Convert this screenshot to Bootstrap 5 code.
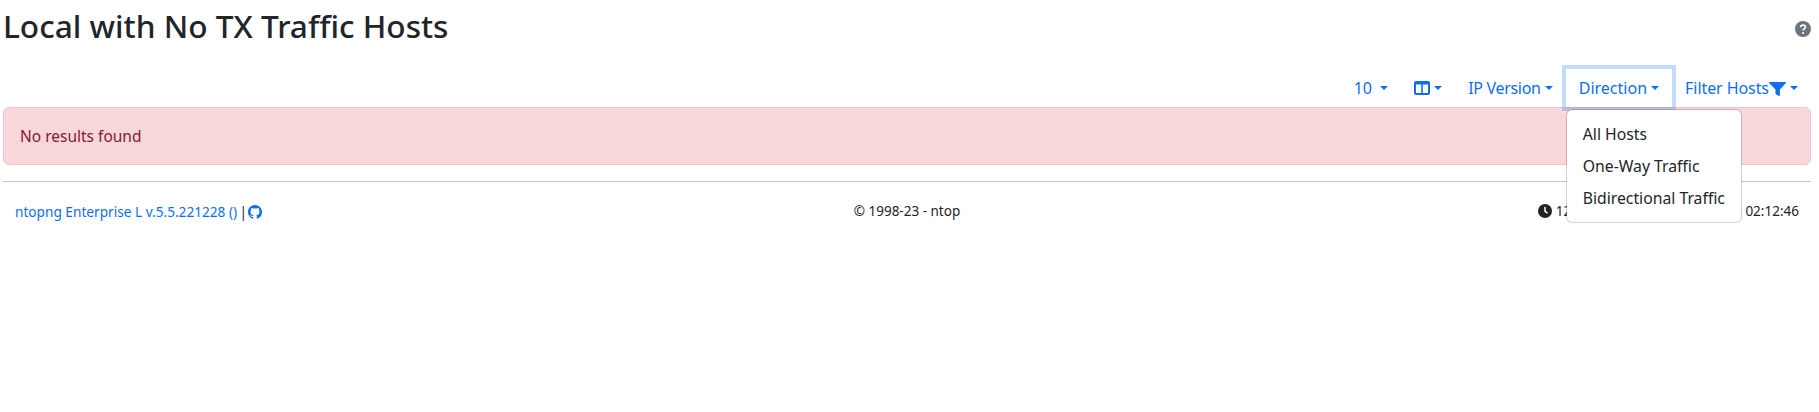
<!DOCTYPE html>
<html lang="en">
<head>
<meta charset="utf-8">
<title>Local with No TX Traffic Hosts</title>
<link href="https://cdn.jsdelivr.net/npm/bootstrap@5.3.0/dist/css/bootstrap.min.css" rel="stylesheet">
<style>
body{font-family:"Noto Sans","Liberation Sans",sans-serif;font-size:16px;color:#212529;background:#fff}
.page-wrap{padding:0 8px 0 3px}
.page-head{height:69px}
.page-title{font-size:31.6px;font-weight:500;line-height:36px;margin:8px 0 0;white-space:nowrap}
.help-ico{width:16px;height:16px;margin:21px 0 0;display:block}
.tool-btn{color:#0d6efd;border:1px solid transparent;border-radius:0;padding:6px 12px;background:transparent;white-space:nowrap;line-height:24px;height:38px;font-size:16px;letter-spacing:-.1px}
.tool-btn:hover{color:#0d6efd}
.tool-btn.wide-text{letter-spacing:0}
.tool-btn.filter-text{letter-spacing:-.08px}
.tool-btn.tight-text{letter-spacing:-.3px}
.tool-btn.is-focus{box-shadow:0 0 0 4px rgba(13,110,253,.25);position:relative;z-index:2}
.tool-ico{width:16px;height:14px;vertical-align:-1px}
.filter-ico{width:17px;height:14px;vertical-align:-2px}
.tool-menu{width:176px;margin-top:3px;left:1px;font-size:15.75px;z-index:1000}
.tool-menu .dropdown-item{white-space:nowrap;line-height:24px}
.result-alert{height:58px;margin:0;font-size:15.5px;line-height:24px;color:#842029;background:#f8d7da;border-color:#f5c2c7}
.foot-rule{margin:16px 0 0;border-top:1px solid #8a8a8a;opacity:.5}
.foot-row{font-size:13.5px;padding:19px 0;line-height:21px}
.foot-left{font-size:13.65px;padding-left:12px}
.foot-right{padding-right:12px}
.foot-sep{letter-spacing:-1.2px}
.foot-row a{text-decoration:none;color:#0d6efd}
.gh-ico{width:14px;height:14px;vertical-align:-2px;fill:#0d6efd}
.clock-ico{width:14px;height:14px;vertical-align:-2px}
</style>
</head>
<body>
<div class="page-wrap">
  <div class="d-flex justify-content-between align-items-start page-head">
    <h2 class="page-title">Local with No TX Traffic Hosts</h2>
    <svg class="help-ico" viewBox="0 0 16 16" aria-label="help"><circle cx="8" cy="8" r="8" fill="#6c757d"/><path d="M5.6 6.2C5.7 4.8 6.7 4.1 8 4.1c1.4 0 2.4.8 2.4 2 0 1-.6 1.4-1.2 1.8-.7.4-1.1.8-1.1 1.6" fill="none" stroke="#fff" stroke-width="1.7"/><circle cx="8.1" cy="12" r="1.1" fill="#fff"/></svg>
  </div>
  <div class="d-flex justify-content-end">
    <div class="dropdown"><button type="button" class="btn tool-btn dropdown-toggle">10 </button></div>
    <div class="dropdown"><button type="button" class="btn tool-btn dropdown-toggle"><svg class="tool-ico" viewBox="0 0 16 14"><rect x="0" y="0" width="16" height="14" rx="2" fill="#0d6efd"/><rect x="2" y="3.5" width="5.2" height="8.5" fill="#fff"/><rect x="8.8" y="3.5" width="5.2" height="8.5" fill="#fff"/></svg></button></div>
    <div class="dropdown"><button type="button" class="btn tool-btn tight-text dropdown-toggle">IP Version</button></div>
    <div class="dropdown">
      <button type="button" class="btn tool-btn wide-text is-focus dropdown-toggle">Direction</button>
      <ul class="dropdown-menu show tool-menu" data-bs-popper="static">
        <li><a class="dropdown-item" href="#">All Hosts</a></li>
        <li><a class="dropdown-item" href="#">One-Way Traffic</a></li>
        <li><a class="dropdown-item" href="#">Bidirectional Traffic</a></li>
      </ul>
    </div>
    <div class="dropdown"><button type="button" class="btn tool-btn filter-text dropdown-toggle">Filter Hosts<svg class="filter-ico" viewBox="0 0 17 14"><path d="M.6 0h15.8c.5 0 .8.6.5 1l-6 6.6V13c0 .8-.8 1.2-1.4.7L7 12.2c-.3-.2-.5-.5-.5-.8V7.6L.1 1C-.2.6.1 0 .6 0z" fill="#0d6efd"/></svg></button></div>
  </div>
  <div class="alert alert-danger result-alert" role="alert">No results found</div>
  <hr class="foot-rule">
  <div class="row foot-row gx-0">
    <div class="col-4 foot-left"><a href="#">ntopng Enterprise L v.5.5.221228 ()</a><span class="foot-sep"> | </span><a href="#"><svg class="gh-ico" viewBox="0 0 16 16"><path d="M8 0C3.58 0 0 3.58 0 8c0 3.54 2.29 6.53 5.47 7.59.4.07.55-.17.55-.38 0-.19-.01-.82-.01-1.49-2.01.37-2.53-.49-2.69-.94-.09-.23-.48-.94-.82-1.13-.28-.15-.68-.52-.01-.53.63-.01 1.08.58 1.23.82.72 1.21 1.87.87 2.33.66.07-.52.28-.87.51-1.07-1.78-.2-3.64-.89-3.64-3.95 0-.87.31-1.59.82-2.15-.08-.2-.36-1.02.08-2.12 0 0 .67-.21 2.2.82.64-.18 1.32-.27 2-.27.68 0 1.36.09 2 .27 1.53-1.04 2.2-.82 2.2-.82.44 1.1.16 1.92.08 2.12.51.56.82 1.27.82 2.15 0 3.07-1.87 3.75-3.65 3.95.29.25.54.73.54 1.48 0 1.07-.01 1.93-.01 2.2 0 .21.15.46.55.38A8.013 8.013 0 0016 8c0-4.42-3.58-8-8-8z"/></svg></a></div>
    <div class="col-4 text-center">© 1998-23 - ntop</div>
    <div class="col-4 text-end foot-right"><svg class="clock-ico" viewBox="0 0 14 14"><circle cx="7" cy="7" r="7" fill="#212529"/><path d="M7 3v4.3l2.6 1.8" fill="none" stroke="#fff" stroke-width="1.5"/></svg> 12/28/2022 9:15:03 | Uptime: 02:12:46</div>
  </div>
</div>
</body>
</html>
